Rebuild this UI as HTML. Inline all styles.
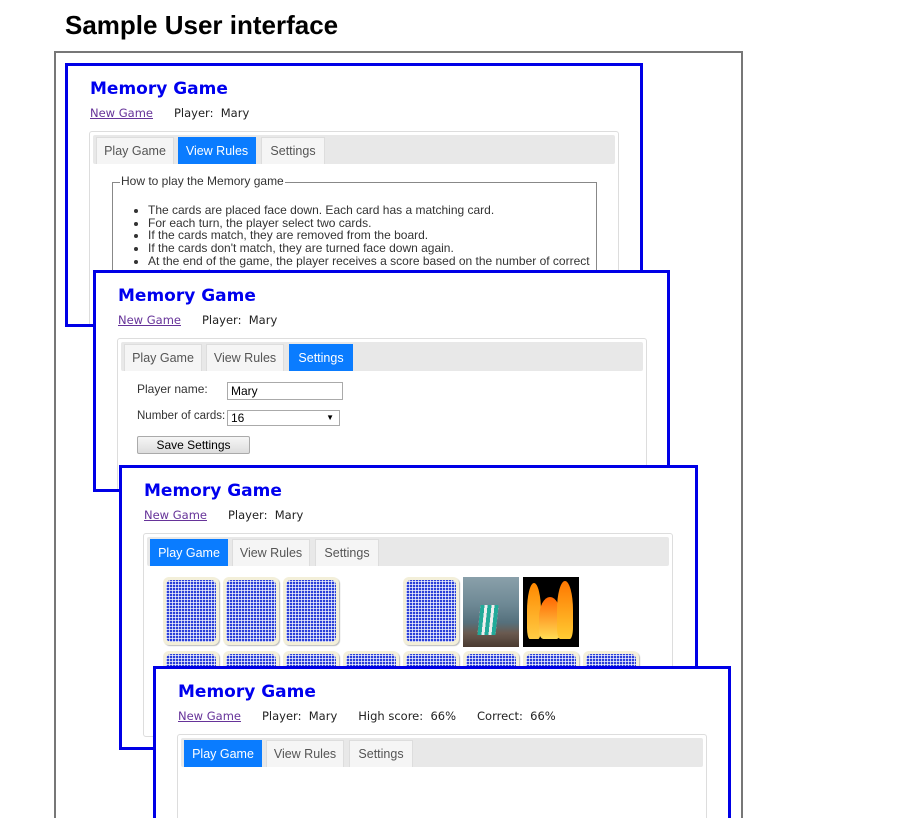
<!DOCTYPE html>
<html><head><meta charset="utf-8"><style>
*{box-sizing:border-box;margin:0;padding:0}
html,body{width:899px;height:818px;overflow:hidden}
body{background:#fff;position:relative;font-family:"Liberation Sans",Arial,sans-serif}
.abs{position:absolute}
h1.top{position:absolute;left:65px;top:10px;font-size:26px;font-weight:bold;color:#000}
.frame{position:absolute;left:54px;top:51px;width:689px;height:767px;border:2px solid #777;border-bottom:none}
.panel{position:absolute;background:#fff;border:3px solid #0000e6;overflow:hidden}
.title{position:absolute;left:22px;top:13px;font-family:"DejaVu Sans",Verdana,sans-serif;font-weight:bold;font-size:17px;color:#0000ee}
.nav{position:absolute;left:22px;top:40px;font-family:"DejaVu Sans",Verdana,sans-serif;font-size:11.5px;color:#222;white-space:nowrap}
.nav a{color:#663399;text-decoration:underline;margin-right:21px}
.nav span{margin-right:21px}
.box{position:absolute;left:21px;top:65px;width:530px;height:300px;border:1px solid #ddd;border-radius:3px;background:#fff}
.bar{position:absolute;left:3px;top:3px;right:3px;height:29px;background:#e8e8e8;border-radius:2px}
.tab{position:absolute;top:5px;height:27px;border:1px solid #ddd;border-bottom:none;background:#f5f5f5;color:#555;font-size:12.5px;text-align:center;line-height:26px}
.tab.on{background:#0a7cff;color:#fff;border-color:#0a7cff}
.card{position:absolute;width:56px;height:68px;border-radius:6px;background:#f3efd9;box-shadow:1px 1px 1px #bbb}
.card::after{content:"";position:absolute;left:3px;top:3px;right:3px;bottom:3px;border-radius:5px;background-color:#2a3fd8;
background-image:repeating-linear-gradient(0deg,rgba(255,255,255,.7) 0 1px,transparent 1px 3px),repeating-linear-gradient(90deg,rgba(255,255,255,.7) 0 1px,transparent 1px 3px)}
</style></head><body>
<h1 class="top">Sample User interface</h1>
<div class="frame"></div>

<!-- panel 1 -->
<div class="panel" style="left:65px;top:63px;width:578px;height:264px">
 <div class="title">Memory Game</div>
 <div class="nav"><a>New Game</a><span>Player:&nbsp; Mary</span></div>
 <div class="box">
  <div class="bar"></div>
  <div class="tab" style="left:6px;width:78px">Play Game</div>
  <div class="tab on" style="left:88px;width:78px">View Rules</div>
  <div class="tab" style="left:171px;width:64px">Settings</div>
  <div class="abs" style="left:22px;top:50px;width:485px;height:200px;border:1px solid #888"></div>
  <div class="abs" style="left:30px;top:42px;background:#fff;padding:0 1px;font-size:12px;color:#333">How to play the Memory game</div>
  <ul class="abs" style="left:58px;top:72px;font-size:12px;color:#333;line-height:12.7px;width:460px">
   <li>The cards are placed face down. Each card has a matching card.</li>
   <li>For each turn, the player select two cards.</li>
   <li>If the cards match, they are removed from the board.</li>
   <li>If the cards don't match, they are turned face down again.</li>
   <li>At the end of the game, the player receives a score based on the number of correct selections that were made.</li>
  </ul>
 </div>
</div>

<!-- panel 2 -->
<div class="panel" style="left:93px;top:270px;width:577px;height:222px">
 <div class="title">Memory Game</div>
 <div class="nav"><a>New Game</a><span>Player:&nbsp; Mary</span></div>
 <div class="box">
  <div class="bar"></div>
  <div class="tab" style="left:6px;width:78px">Play Game</div>
  <div class="tab" style="left:88px;width:78px">View Rules</div>
  <div class="tab on" style="left:171px;width:64px">Settings</div>
  <div class="abs" style="left:19px;top:43px;font-size:12px;color:#333">Player name:</div>
  <div class="abs" style="left:109px;top:43px;width:116px;height:18px;border:1px solid #aaa;font-size:12px;padding-left:3px;line-height:16px">Mary</div>
  <div class="abs" style="left:19px;top:71px;font-size:11.5px;color:#333;white-space:nowrap">Number of cards:</div>
  <div class="abs" style="left:109px;top:71px;width:113px;height:16px;border:1px solid #aaa;font-size:12px;padding-left:3px;line-height:14px">16<span style="position:absolute;right:5px;font-size:8px">▼</span></div>
  <div class="abs" style="left:19px;top:97px;width:113px;height:18px;border:1px solid #aaa;border-radius:2px;background:linear-gradient(#f6f6f6,#ddd);font-size:12px;text-align:center;line-height:16px">Save Settings</div>
 </div>
</div>

<!-- panel 3 -->
<div class="panel" style="left:119px;top:465px;width:579px;height:285px">
 <div class="title">Memory Game</div>
 <div class="nav"><a>New Game</a><span>Player:&nbsp; Mary</span></div>
 <div class="box" style="height:204px">
  <div class="bar"></div>
  <div class="tab on" style="left:6px;width:78px">Play Game</div>
  <div class="tab" style="left:88px;width:78px">View Rules</div>
  <div class="tab" style="left:171px;width:64px">Settings</div>
 </div>
 <div class="card" style="left:41px;top:109px"></div>
 <div class="card" style="left:101px;top:109px"></div>
 <div class="card" style="left:161px;top:109px"></div>
 <div class="card" style="left:281px;top:109px"></div>
 <div class="abs" style="left:341px;top:109px;width:56px;height:70px;background:linear-gradient(#8aa0aa,#6d8894 40%,#55707c 65%,#6a5a50 80%,#4a3a30)"><div class="abs" style="left:16px;top:28px;width:18px;height:30px;background:repeating-linear-gradient(90deg,#2a9 0 4px,#eee 4px 7px);transform:skewX(-6deg)"></div></div>
 <div class="abs" style="left:401px;top:109px;width:56px;height:70px;background:#000;overflow:hidden">
  <div class="abs" style="left:4px;top:6px;width:14px;height:56px;border-radius:50% 50% 20% 20%;background:linear-gradient(#f80,#fc4)"></div>
  <div class="abs" style="left:16px;top:20px;width:22px;height:42px;border-radius:50% 50% 20% 20%;background:linear-gradient(#f60,#fd5)"></div>
  <div class="abs" style="left:34px;top:4px;width:16px;height:58px;border-radius:50% 50% 20% 20%;background:linear-gradient(#f70,#fc3)"></div>
 </div>
 <div class="card" style="left:41px;top:183px"></div>
 <div class="card" style="left:101px;top:183px"></div>
 <div class="card" style="left:161px;top:183px"></div>
 <div class="card" style="left:221px;top:183px"></div>
 <div class="card" style="left:281px;top:183px"></div>
 <div class="card" style="left:341px;top:183px"></div>
 <div class="card" style="left:401px;top:183px"></div>
 <div class="card" style="left:461px;top:183px"></div>
</div>

<!-- panel 4 -->
<div class="panel" style="left:153px;top:666px;width:578px;height:152px;border-bottom:none">
 <div class="title">Memory Game</div>
 <div class="nav"><a>New Game</a><span>Player:&nbsp; Mary</span><span>High score:&nbsp; 66%</span><span>Correct:&nbsp; 66%</span></div>
 <div class="box" style="height:90px;border-bottom:none">
  <div class="bar"></div>
  <div class="tab on" style="left:6px;width:78px">Play Game</div>
  <div class="tab" style="left:88px;width:78px">View Rules</div>
  <div class="tab" style="left:171px;width:64px">Settings</div>
 </div>
</div>
</body></html>
